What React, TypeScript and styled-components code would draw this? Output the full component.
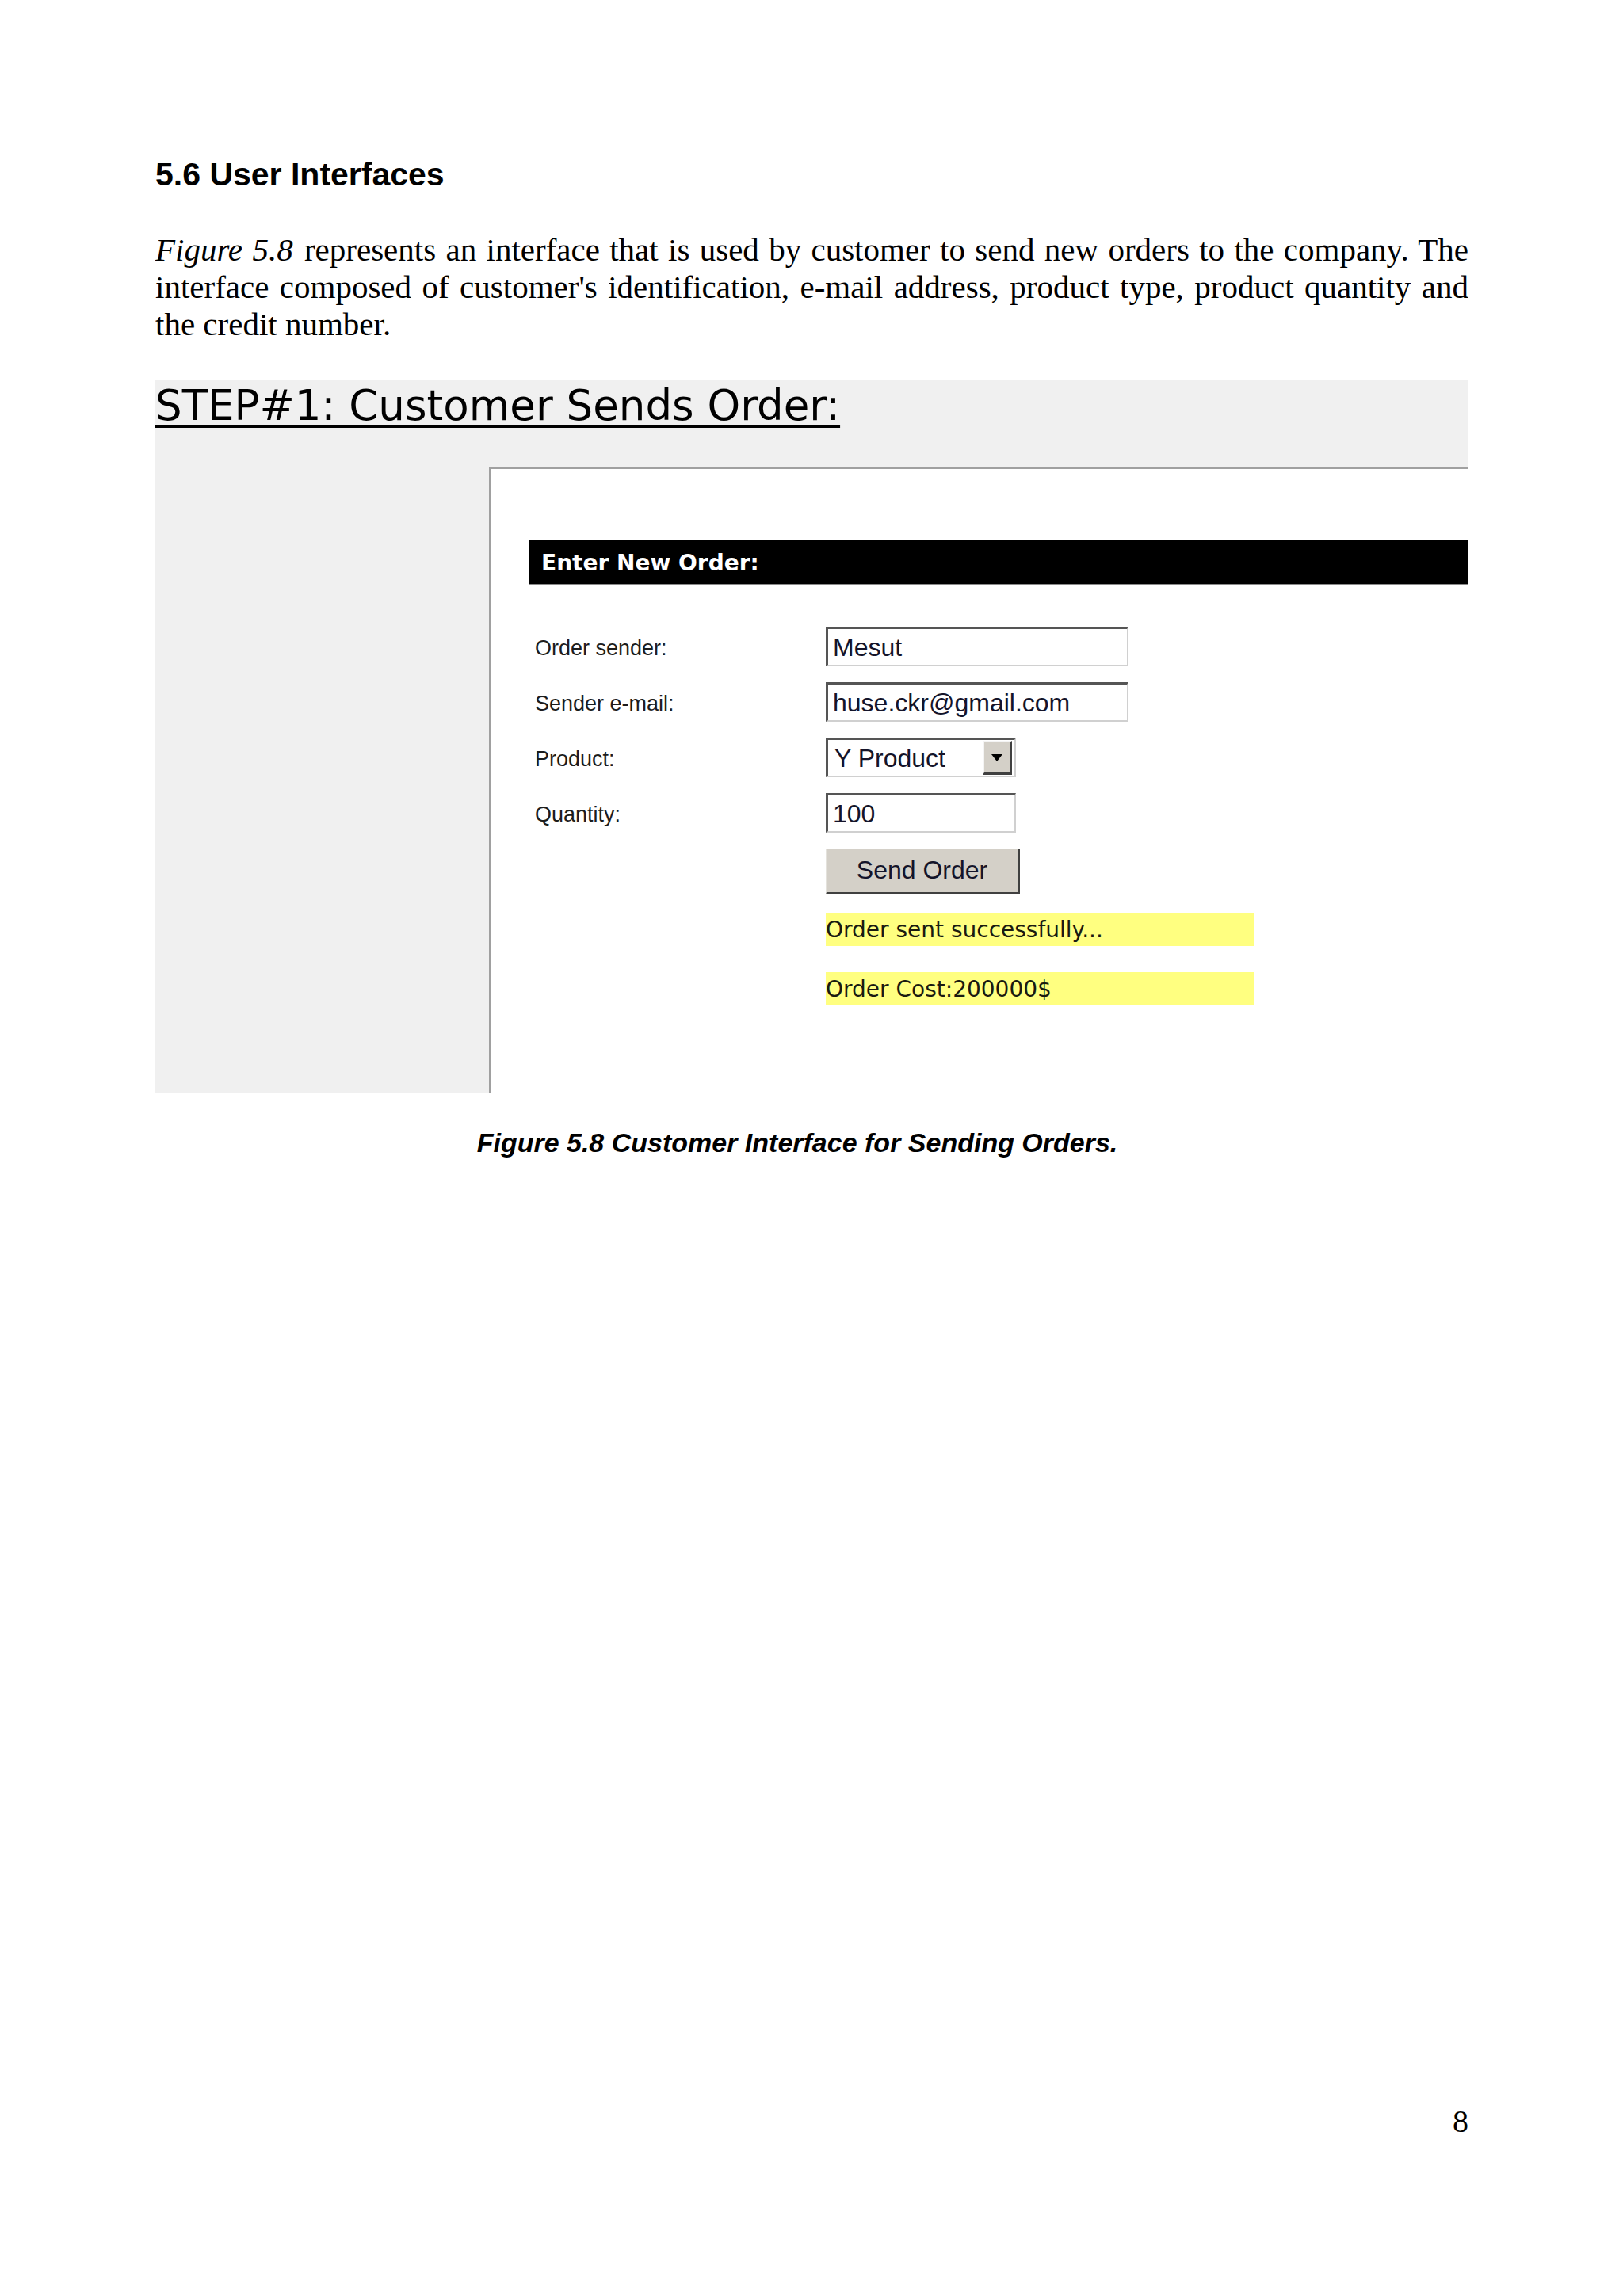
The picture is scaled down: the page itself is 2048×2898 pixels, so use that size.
import styled, { createGlobalStyle } from 'styled-components';

// Document page with embedded "send order" screenshot
const GlobalStyle = createGlobalStyle`
  html, body {
    margin: 0;
    padding: 0;
    background: #ffffff;
  }
`;

type Field = { label: string; value: string };

const fields: Field[] = [
  { label: 'Order sender:', value: 'Mesut' },
  { label: 'Sender e-mail:', value: 'huse.ckr@gmail.com' },
];

export default function App() {
  return (
    <Page>
      <GlobalStyle />
      <SectionTitle>5.6 User Interfaces</SectionTitle>
      <BodyText>
        <em>Figure 5.8</em> represents an interface that is used by customer to send new orders to the
        company. The interface composed of customer's identification, e-mail address, product type,
        product quantity and the credit number.
      </BodyText>

      <Shot>
        <StepTitle>STEP#1: Customer Sends Order:</StepTitle>
        <ShotBody>
          <SideSpace />
          <Panel>
            <FormHeader>Enter New Order:</FormHeader>
            <FormGrid>
              {fields.map((f) => (
                <FormRow key={f.label}>
                  <FieldLabel>{f.label}</FieldLabel>
                  <TextBox $width={382}>{f.value}</TextBox>
                </FormRow>
              ))}
              <FormRow>
                <FieldLabel>Product:</FieldLabel>
                <SelectBox>
                  <SelectValue>Y Product</SelectValue>
                  <SelectArrow>
                    <Triangle />
                  </SelectArrow>
                </SelectBox>
              </FormRow>
              <FormRow>
                <FieldLabel>Quantity:</FieldLabel>
                <TextBox $width={240}>100</TextBox>
              </FormRow>
              <ActionCell>
                <SendButton type="button">Send Order</SendButton>
                <Notice $gap={23}>Order sent successfully...</Notice>
                <Notice $gap={33}>Order Cost:200000$</Notice>
              </ActionCell>
            </FormGrid>
          </Panel>
        </ShotBody>
      </Shot>

      <Caption>Figure 5.8 Customer Interface for Sending Orders.</Caption>
      <PageNumber>8</PageNumber>
    </Page>
  );
}

const Page = styled.div`
  width: 2048px;
  min-height: 2898px;
  box-sizing: border-box;
  padding: 200px 195px 200px 196px;
  background: #ffffff;
  color: #000000;
`;

const SectionTitle = styled.h2`
  margin: 0;
  font-family: 'Liberation Sans', Arial, sans-serif;
  font-size: 41px;
  line-height: 1;
  font-weight: bold;
`;

const BodyText = styled.p`
  margin: 51px 0 0;
  font-family: 'Liberation Serif', 'Times New Roman', serif;
  font-size: 41px;
  line-height: 47px;
  text-align: justify;

  em {
    font-style: italic;
    padding-right: 2px;
  }
`;

const Shot = styled.div`
  margin-top: 47px;
  height: 900px;
  box-sizing: border-box;
  padding-top: 5px;
  background: #f0f0f0;
  display: flex;
  flex-direction: column;
`;

const StepTitle = styled.div`
  font-family: 'DejaVu Sans', Verdana, sans-serif;
  font-size: 53px;
  line-height: 1;
  color: #000000;
  text-decoration: underline;
  text-decoration-thickness: 3px;
  text-underline-offset: 7px;
`;

const ShotBody = styled.div`
  margin-top: 52px;
  flex: 1;
  display: flex;
`;

const SideSpace = styled.div`
  width: 421px;
  flex-shrink: 0;
`;

const Panel = styled.div`
  flex: 1;
  background: #ffffff;
  border-top: 2px solid #a0a0a0;
  border-left: 2px solid #a0a0a0;
  padding: 90px 0 0 48px;
`;

const FormHeader = styled.div`
  height: 57px;
  box-sizing: border-box;
  padding: 2px 0 0 16px;
  background: #000000;
  border-bottom: 2px solid #8a8a8a;
  color: #ffffff;
  font-family: 'DejaVu Sans', Verdana, sans-serif;
  font-weight: bold;
  font-size: 28px;
  line-height: 53px;
`;

const FormGrid = styled.div`
  margin-top: 52px;
  padding-left: 8px;
  display: flex;
  flex-direction: column;
  gap: 20px;
`;

const FormRow = styled.div`
  display: grid;
  grid-template-columns: 367px auto;
  align-items: center;
`;

const FieldLabel = styled.div`
  font-family: 'Liberation Sans', Arial, sans-serif;
  font-size: 27px;
  color: #1c1c1c;
  padding-top: 4px;
`;

const TextBox = styled.div<{ $width: number }>`
  width: ${(p) => p.$width}px;
  height: 50px;
  box-sizing: border-box;
  border-top: 3px solid #555555;
  border-left: 3px solid #555555;
  border-right: 2px solid #d0d0d0;
  border-bottom: 2px solid #d0d0d0;
  background: #ffffff;
  padding: 2px 0 0 6px;
  font-family: 'Liberation Sans', Arial, sans-serif;
  font-size: 32px;
  line-height: 43px;
  color: #14142a;
`;

const SelectBox = styled.div`
  width: 240px;
  height: 50px;
  box-sizing: border-box;
  border-top: 3px solid #555555;
  border-left: 3px solid #555555;
  border-right: 2px solid #d0d0d0;
  border-bottom: 2px solid #d0d0d0;
  background: #ffffff;
  display: flex;
  align-items: center;
  justify-content: space-between;
  padding: 0 3px 0 8px;
`;

const SelectValue = styled.span`
  font-family: 'Liberation Sans', Arial, sans-serif;
  font-size: 32px;
  color: #14142a;
  padding-top: 2px;
`;

const SelectArrow = styled.span`
  width: 37px;
  height: 43px;
  box-sizing: border-box;
  background: #d4d0c8;
  border-top: 2px solid #f4f4f4;
  border-left: 2px solid #f4f4f4;
  border-right: 3px solid #404040;
  border-bottom: 3px solid #404040;
  display: flex;
  align-items: center;
  justify-content: center;
`;

const Triangle = styled.span`
  width: 0;
  height: 0;
  border-left: 7px solid transparent;
  border-right: 7px solid transparent;
  border-top: 9px solid #000000;
`;

const ActionCell = styled.div`
  margin-left: 367px;
  display: flex;
  flex-direction: column;
  align-items: flex-start;
`;

const SendButton = styled.button`
  width: 245px;
  height: 58px;
  box-sizing: border-box;
  margin: 0;
  padding: 0 0 2px;
  background: #d4d0c8;
  border-top: 1px solid #e4e2dc;
  border-left: 1px solid #e4e2dc;
  border-right: 3px solid #404040;
  border-bottom: 3px solid #404040;
  border-radius: 0;
  font-family: 'Liberation Sans', Arial, sans-serif;
  font-size: 32px;
  color: #14142a;
`;

const Notice = styled.div<{ $gap: number }>`
  margin-top: ${(p) => p.$gap}px;
  width: 540px;
  height: 42px;
  box-sizing: border-box;
  padding-top: 2px;
  background: #ffff80;
  font-family: 'DejaVu Sans', Verdana, sans-serif;
  font-size: 28px;
  line-height: 40px;
  color: #1a1a10;
  white-space: nowrap;
`;

const Caption = styled.div`
  margin-top: 45px;
  padding-right: 37px;
  text-align: center;
  font-family: 'Liberation Sans', Arial, sans-serif;
  font-size: 34px;
  line-height: 1;
  font-weight: bold;
  font-style: italic;
`;

const PageNumber = styled.div`
  margin-top: 1199px;
  text-align: right;
  font-family: 'Liberation Serif', 'Times New Roman', serif;
  font-size: 40px;
  line-height: 1;
`;
